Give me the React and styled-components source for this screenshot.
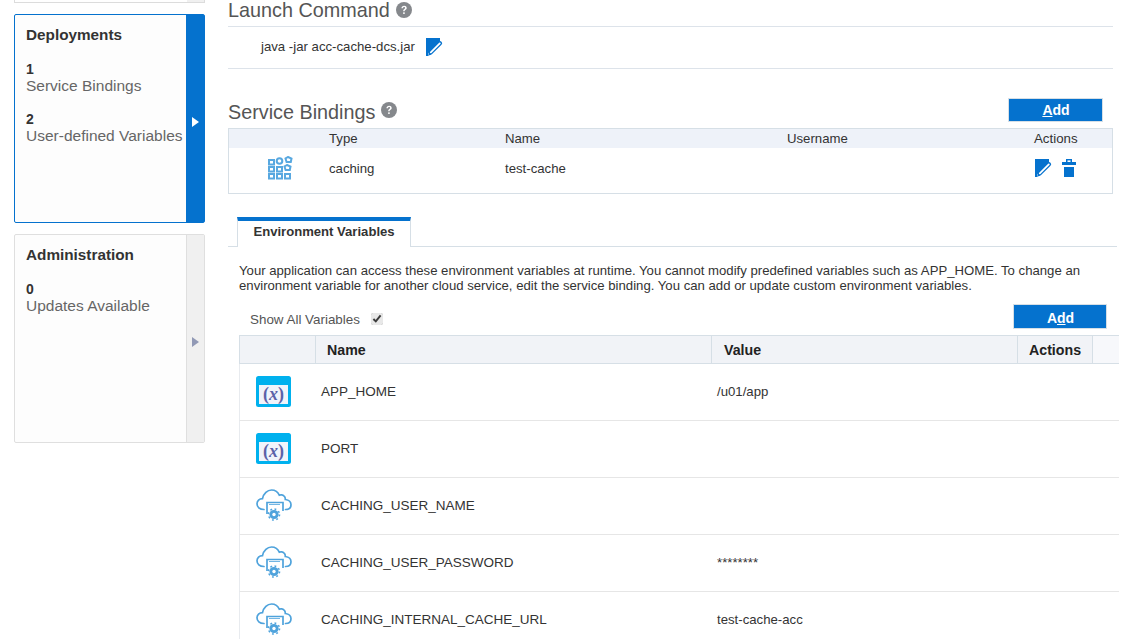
import React from "react";
import styled, { createGlobalStyle } from "styled-components";

const bindings = [{ type: "caching", name: "test-cache", username: "" }];

const variables = [
  { kind: "var", name: "APP_HOME", value: "/u01/app" },
  { kind: "var", name: "PORT", value: "" },
  { kind: "cloud", name: "CACHING_USER_NAME", value: "" },
  { kind: "cloud", name: "CACHING_USER_PASSWORD", value: "********" },
  { kind: "cloud", name: "CACHING_INTERNAL_CACHE_URL", value: "test-cache-acc" },
];

function HelpIcon() {
  return (
    <svg width="16" height="16" viewBox="0 0 16 16">
      <circle cx="8" cy="8" r="8" fill="#85888c" />
      <path d="M5.4 6.2C5.5 4.6 6.6 3.700 8.100 3.700c1.500 0 2.600.9 2.600 2.200 0 1-.6 1.500-1.300 2-.6.4-.8.7-.8 1.400H7.200c0-1.100.3-1.700 1.100-2.200.5-.4.8-.6.8-1.100 0-.5-.4-.9-1-.9-.7 0-1.100.4-1.200 1.100H5.400z" fill="#fff" />
      <rect x="7.200" y="10.300" width="1.500" height="1.700" fill="#fff" />
    </svg>
  );
}

function EditIcon() {
  return (
    <svg width="17" height="18" viewBox="0 0 17 18">
      <path d="M0 0H14V3.500L2.500 15V18H0Z" fill="#0572ce" />
      <path d="M4.600 14.600 14 5.200" stroke="#0572ce" strokeWidth="4.200" strokeLinecap="round" />
      <path d="M4.800 14.400 13.800 5.400" stroke="#fff" strokeWidth="1.800" strokeLinecap="round" />
      <path d="M2.500 17.600 3.200 14.800 5.300 16.800z" fill="#0572ce" />
    </svg>
  );
}

function TrashIcon() {
  return (
    <svg width="14" height="18" viewBox="0 0 14 18">
      <path d="M4 0h6v3h4v3H0V3h4z" fill="#0572ce" />
      <rect x="5.500" y="1.400" width="3" height="1.600" fill="#fff" />
      <rect x="2" y="8" width="10" height="10" fill="#0572ce" />
    </svg>
  );
}

function CachingIcon() {
  return (
    <svg width="26" height="24" viewBox="0 0 26 24" fill="#fff" stroke="#58a8e0" strokeWidth="2">
      <rect x="2" y="4" width="5" height="4.500" />
      <rect x="2" y="11" width="5" height="4.500" />
      <rect x="2" y="18" width="5" height="4.500" />
      <rect x="10" y="11" width="5" height="4.500" />
      <rect x="10" y="18" width="5" height="4.500" />
      <rect x="18" y="18" width="5" height="4.500" />
      <circle cx="12.500" cy="5" r="2.800" />
      <path d="M21 1 24.500 2.500 23.800 6h-4.200L18.500 2.500z" />
      <path d="M20 9 23.500 10.500 22.800 14h-4.200L17.500 10.500z" />
    </svg>
  );
}

function VariableIcon() {
  return (
    <svg width="36" height="31" viewBox="0 0 36 31">
      <rect width="35" height="31" rx="2.500" fill="#00b1ee" />
      <rect x="3" y="9" width="29" height="19" fill="#f0f4fb" />
      <text x="17.500" y="24" textAnchor="middle" fontFamily="'Liberation Serif', serif" fontWeight="700" fontSize="18" fill="#5b62a8">
        (<tspan fontStyle="italic">x</tspan>)
      </text>
    </svg>
  );
}

function CloudIcon() {
  return (
    <svg width="36" height="32" viewBox="0 0 36 32" fill="none" stroke="#4fa3dc" strokeWidth="1.700">
      <path d="M8 20.500C3.500 20.500 1 18 1 14.800c0-3 2.300-5.200 5.500-5.200C7.500 4.500 11.500 1 15.500 1c3.500 0 6.500 2 7.800 5.200 1-.5 4-.6 5.200 1.400.7 1 .9 2 .8 2.900 3.500.4 5.700 2.500 5.700 5.200 0 2.700-2 4.800-5.500 4.800" strokeLinecap="round" />
      <path d="M11 25V13.500h16V22" />
      <path d="M13 15.500h11" strokeWidth="0.800" />
      <circle cx="18" cy="25.500" r="4.600" fill="#4fa3dc" stroke="none" />
      <circle cx="18" cy="25.500" r="5.500" strokeDasharray="1.800 2.500" strokeWidth="1.600" />
      <circle cx="18" cy="25.500" r="1.700" fill="#fff" stroke="none" />
    </svg>
  );
}

export default function App() {
  return (
    <Page>
      <GlobalStyle />
      <Sidebar>
        <StubCard />
        <Card $active>
          <CardBody>
            <CardTitle>Deployments</CardTitle>
            <Stat>
              <StatValue>1</StatValue>
              <StatLabel>Service Bindings</StatLabel>
            </Stat>
            <Stat>
              <StatValue>2</StatValue>
              <StatLabel>User-defined Variables</StatLabel>
            </Stat>
          </CardBody>
          <CardHandle $active>
            <Arrow $active />
          </CardHandle>
        </Card>
        <Card>
          <CardBody>
            <CardTitle>Administration</CardTitle>
            <Stat>
              <StatValue>0</StatValue>
              <StatLabel>Updates Available</StatLabel>
            </Stat>
          </CardBody>
          <CardHandle>
            <Arrow />
          </CardHandle>
        </Card>
      </Sidebar>

      <Main>
        <HeadingRow>
          <Heading>Launch Command</Heading>
          <HelpIcon />
        </HeadingRow>
        <CommandRow>
          <CommandText>java -jar acc-cache-dcs.jar</CommandText>
          <EditIcon />
        </CommandRow>

        <BindingsHead>
          <HeadingRow>
            <Heading $low>Service Bindings</Heading>
            <HelpIcon />
          </HeadingRow>
          <AddButton>
            <u>A</u>dd
          </AddButton>
        </BindingsHead>
        <BindingsTable>
          <BindingsHeader>
            <span />
            <span>Type</span>
            <span>Name</span>
            <span>Username</span>
            <ActionsLabel>Actions</ActionsLabel>
          </BindingsHeader>
          {bindings.map((row) => (
            <BindingsRow key={row.name}>
              <IconCell>
                <CachingIcon />
              </IconCell>
              <span>{row.type}</span>
              <span>{row.name}</span>
              <span>{row.username}</span>
              <ActionIcons>
                <EditIcon />
                <TrashIcon />
              </ActionIcons>
            </BindingsRow>
          ))}
        </BindingsTable>

        <EnvSection>
          <TabBar>
            <Tab>Environment Variables</Tab>
          </TabBar>
          <Description>
            Your application can access these environment variables at runtime. You cannot modify predefined variables such as APP_HOME. To change an environment variable for another cloud service, edit the service binding. You can add or update custom environment variables.
          </Description>
          <FilterRow>
            <ShowAll>
              Show All Variables
              <CheckBox type="checkbox" defaultChecked />
            </ShowAll>
            <AddButton $second>
              A<u>d</u>d
            </AddButton>
          </FilterRow>
          <VarHeader>
            <HeadCell />
            <HeadCell>Name</HeadCell>
            <HeadCell>Value</HeadCell>
            <HeadCell>Actions</HeadCell>
            <HeadFiller />
          </VarHeader>
          {variables.map((row) => (
            <VarRow key={row.name}>
              <VarIconCell>{row.kind === "var" ? <VariableIcon /> : <CloudIcon />}</VarIconCell>
              <VarName>{row.name}</VarName>
              <VarValue>{row.value}</VarValue>
            </VarRow>
          ))}
        </EnvSection>
      </Main>
    </Page>
  );
}

const GlobalStyle = createGlobalStyle`
  html, body {
    margin: 0;
    height: 639px;
    overflow: hidden;
    background: #fff;
    font-family: "Liberation Sans", Arial, sans-serif;
    color: #333;
  }
`;

const Page = styled.div`
  display: flex;
  align-items: flex-start;
  width: 1134px;
  height: 639px;
  overflow: hidden;
`;

const Sidebar = styled.aside`
  display: flex;
  flex-direction: column;
  gap: 11px;
  flex: none;
  width: 191px;
  margin-left: 14px;
`;

const StubCard = styled.div`
  height: 2px;
  background: linear-gradient(to right, #fff 172px, #f0f0f0 172px);
  border: 1px solid #dcdcdc;
  border-top: 0;
`;

const Card = styled.div`
  display: flex;
  height: 209px;
  box-sizing: border-box;
  border: 1px solid ${(p) => (p.$active ? "#0572ce" : "#dfdfdf")};
  border-radius: 2px;
  background: #fdfdfd;
`;

const CardBody = styled.div`
  flex: 1;
  min-width: 0;
  padding: 11px 0 0 11px;
`;

const CardTitle = styled.div`
  font-size: 15.300px;
  line-height: 18px;
  font-weight: 700;
  color: #333;
  margin-bottom: 17px;
`;

const Stat = styled.div`
  margin-bottom: 16px;
  line-height: 16px;
  white-space: nowrap;
`;

const StatValue = styled.div`
  font-size: 14px;
  font-weight: 700;
  color: #333;
`;

const StatLabel = styled.div`
  font-size: 15.500px;
  color: #666;
  line-height: 18px;
`;

const CardHandle = styled.div`
  display: flex;
  align-items: center;
  justify-content: center;
  flex: none;
  box-sizing: border-box;
  width: 18px;
  padding-top: 7px;
  background: ${(p) => (p.$active ? "#0572ce" : "#f0f0f0")};
  border-left: 1px solid ${(p) => (p.$active ? "#0572ce" : "#dfdfdf")};
`;

const Arrow = styled.span`
  width: 0;
  height: 0;
  border-style: solid;
  border-width: 5px 0 5px 7px;
  border-color: transparent transparent transparent ${(p) => (p.$active ? "#fff" : "#9199b5")};
`;

const Main = styled.main`
  flex: none;
  width: 885px;
  margin-left: 23px;
`;

const HeadingRow = styled.div`
  display: flex;
  align-items: center;
  gap: 6px;
`;

const Heading = styled.h2`
  margin: ${(p) => (p.$low ? "4px" : "0")} 0 0;
  font-size: 19.800px;
  line-height: 20px;
  font-weight: 400;
  color: #555;
`;

const CommandRow = styled.div`
  display: flex;
  align-items: center;
  gap: 11px;
  box-sizing: content-box;
  height: 39px;
  margin-top: 6px;
  padding-bottom: 2px;
  padding-left: 33px;
  border-top: 1px solid #dde3ea;
  border-bottom: 1px solid #dde3ea;
`;

const CommandText = styled.span`
  font-size: 13.200px;
  color: #333;
`;

const BindingsHead = styled.div`
  display: flex;
  align-items: center;
  justify-content: space-between;
  height: 24px;
  margin-top: 29px;
  padding-right: 10px;
`;

const AddButton = styled.button`
  width: ${(p) => (p.$second ? "94px" : "95px")};
  height: ${(p) => (p.$second ? "25px" : "24px")};
  padding: ${(p) => (p.$second ? "2px 0 0 1px" : "0 0 1px 1px")};
  border: 1px solid #d6dfe6;
  background: #0572ce;
  color: #fff;
  font-family: inherit;
  font-size: 14px;
  font-weight: 700;
`;

const BindingsTable = styled.div`
  margin-top: 6px;
  height: 66px;
  box-sizing: border-box;
  border: 1px solid #d6dfe6;
  font-size: 13.200px;
  color: #333;
`;

const bindingColumns = "100px 176px 282px 1fr 113px";

const BindingsHeader = styled.div`
  display: grid;
  grid-template-columns: ${bindingColumns};
  align-items: center;
  height: 19px;
  background: #eef2f9;
`;

const ActionsLabel = styled.span`
  padding-left: 35px;
  font-size: 13.300px;
`;

const BindingsRow = styled.div`
  display: grid;
  grid-template-columns: ${bindingColumns};
  align-items: center;
  box-sizing: border-box;
  height: 44px;
  padding-bottom: 4px;
`;

const IconCell = styled.span`
  display: flex;
  padding-left: 38px;
`;

const ActionIcons = styled.span`
  display: flex;
  align-items: center;
  gap: 10px;
  padding-left: 36px;
`;

const EnvSection = styled.section`
  width: 891px;
  margin-top: 23px;
`;

const TabBar = styled.div`
  display: flex;
  height: 29px;
  margin-right: 2px;
  padding-left: 9px;
  border-bottom: 1px solid #d6dfe6;
`;

const Tab = styled.div`
  box-sizing: border-box;
  width: 174px;
  height: 30px;
  padding-top: 1px;
  border: 1px solid #d6dfe6;
  border-top: 4px solid #0572ce;
  border-bottom: 0;
  background: #fff;
  font-size: 13.100px;
  line-height: 20px;
  font-weight: 700;
  text-align: center;
  color: #333;
`;

const Description = styled.p`
  margin: 16px 0 0 11px;
  width: 850px;
  font-size: 13.160px;
  line-height: 15px;
  color: #333;
`;

const FilterRow = styled.div`
  display: flex;
  align-items: center;
  justify-content: space-between;
  height: 25px;
  margin-top: 11px;
  padding: 0 12px 0 22px;
`;

const ShowAll = styled.label`
  display: flex;
  align-items: center;
  gap: 11px;
  padding-top: 5px;
  font-size: 13.400px;
  color: #555;
`;

const CheckBox = styled.input`
  width: 12px;
  height: 12px;
  margin: 0;
  accent-color: #e8e8e8;
`;

const varColumns = "76px 396px 306px 75px 1fr";

const VarHeader = styled.div`
  display: grid;
  grid-template-columns: ${varColumns};
  height: 29px;
  box-sizing: border-box;
  margin: 6px 0 0 11px;
  border-top: 1px solid #d6dfe6;
  border-bottom: 1px solid #d6dfe6;
  border-left: 1px solid #d6dfe6;
  background: #f1f3f7;
`;

const HeadCell = styled.div`
  display: flex;
  align-items: center;
  padding-left: 11px;
  border-right: 1px solid #d6dfe6;
  font-size: 14.200px;
  font-weight: 700;
  color: #222;
  &:nth-child(3) {
    padding-left: 12px;
  }
`;

const HeadFiller = styled.div`
  background: #f7f8fb;
`;

const VarRow = styled.div`
  display: grid;
  grid-template-columns: ${varColumns};
  align-items: center;
  height: 57px;
  box-sizing: border-box;
  margin-left: 11px;
  padding-bottom: 2px;
  border-left: 1px solid #e8ebef;
  border-bottom: 1px solid #e6e6e6;
`;

const VarIconCell = styled.div`
  display: flex;
  padding-left: 16px;
`;

const VarName = styled.div`
  padding-left: 5px;
  font-size: 13.500px;
  color: #333;
`;

const VarValue = styled.div`
  padding-left: 5px;
  font-size: 13.200px;
  color: #333;
`;
